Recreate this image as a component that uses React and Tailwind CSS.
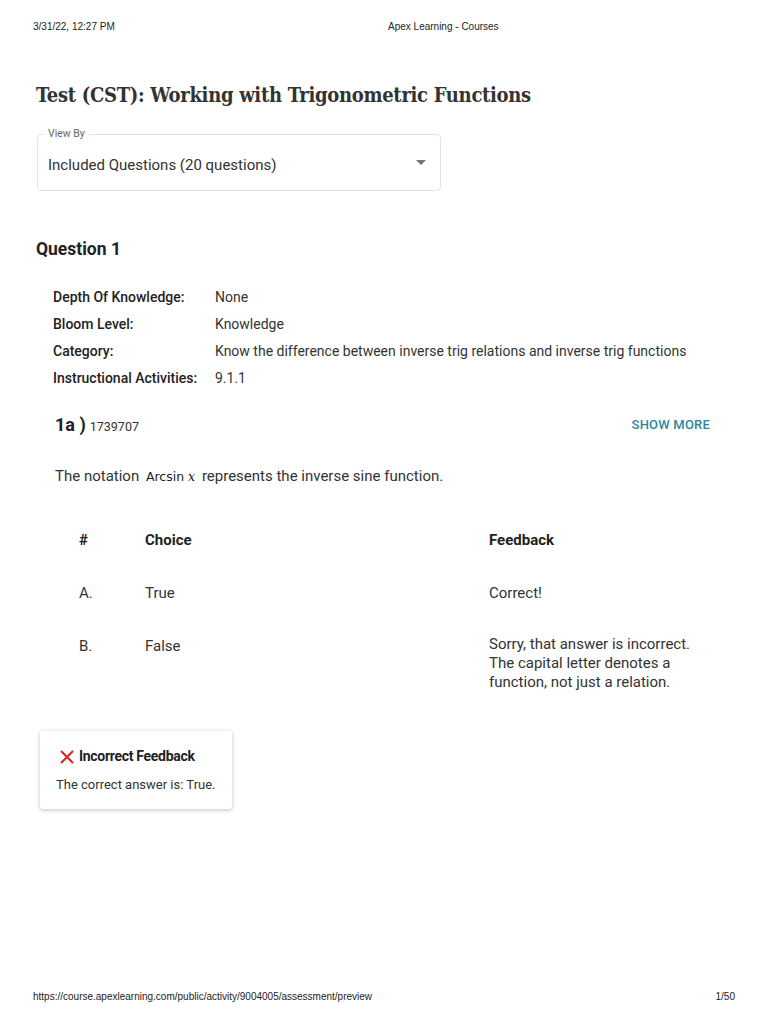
import React from "react";

const roboto = { fontFamily: "Roboto, 'Liberation Sans', sans-serif" };

function Meta({ label, value }) {
  return (
    <div className="flex h-[27px] items-center">
      <div className="w-[162px] shrink-0 text-[14px] font-medium text-[#222]">{label}</div>
      <div className="text-[14px] text-[#333]">{value}</div>
    </div>
  );
}

export default function App() {
  return (
    <div className="relative h-[1024px] w-[768px] bg-white text-[#333]" style={roboto}>
      {/* print header */}
      <div className="flex h-[50px] items-start pt-[19px] pl-[33px] text-[10px] text-[#222] font-['Liberation_Sans',sans-serif]">
        <div className="w-[355px]">3/31/22, 12:27 PM</div>
        <div>Apex Learning - Courses</div>
      </div>

      <div className="pl-[36px] pr-[58px]">
        {/* title */}
        <h1 className="mt-[30px] text-[20px] font-bold leading-[30px] text-[#333] tracking-[-0.3px] font-['DejaVu_Serif_Condensed','DejaVu_Serif',serif]">
          Test (CST): Working with Trigonometric Functions
        </h1>

        {/* select */}
        <div className="relative mt-[24px] ml-[1px] h-[57px] w-[404px] rounded-[4px] border border-[#e3e3e3]">
          <div className="absolute left-[6px] top-[-8px] bg-white px-[4px] text-[10.5px] leading-[14px] text-[#666]">View By</div>
          <div className="flex h-full items-center justify-between pl-[10px] pr-[14px] pt-[6px]">
            <span className="text-[15px] text-[#333]">Included Questions (20 questions)</span>
            <svg width="10" height="5" viewBox="0 0 10 5" className="mb-[6px]">
              <path d="M0 0 L10 0 L5 5 Z" fill="#777" />
            </svg>
          </div>
        </div>

        {/* question */}
        <h2 className="mt-[46px] text-[17.5px] font-bold leading-[24px] text-[#222]">Question 1</h2>

        <div className="mt-[23px] pl-[17px]">
          <Meta label="Depth Of Knowledge:" value="None" />
          <Meta label="Bloom Level:" value="Knowledge" />
          <Meta label="Category:" value="Know the difference between inverse trig relations and inverse trig functions" />
          <Meta label="Instructional Activities:" value="9.1.1" />
        </div>

        <div className="mt-[19px] flex items-center justify-between pl-[19px] pr-[0px]">
          <div className="flex items-baseline gap-[4px]">
            <span className="text-[18px] font-bold text-[#222]">1a )</span>
            <span className="text-[12.5px] text-[#333]">1739707</span>
          </div>
          <span className="text-[13px] font-medium tracking-[0.2px] text-[#2a8a9c]">SHOW MORE</span>
        </div>

        <p className="mt-[27px] pl-[19px] text-[15px] text-[#333]">
          The notation{" "}
          <span className="mx-[3px] text-[12.5px] text-[#222] font-['DejaVu_Sans',sans-serif]">
            Arcsin <i className="font-['DejaVu_Serif',serif]">x</i>
          </span>{" "}
          represents the inverse sine function.
        </p>

        {/* table */}
        <div className="mt-[38px] pl-[43px] text-[15px]">
          <div className="flex h-[30px] items-center font-bold text-[#222]">
            <div className="w-[66px]">#</div>
            <div className="w-[344px]">Choice</div>
            <div>Feedback</div>
          </div>
          <div className="mt-[26px] flex text-[#333]">
            <div className="w-[66px]">A.</div>
            <div className="w-[344px]">True</div>
            <div>Correct!</div>
          </div>
          <div className="mt-[31px] flex text-[#333]">
            <div className="w-[66px]">B.</div>
            <div className="w-[344px]">False</div>
            <div className="w-[215px] leading-[19px]">
              Sorry, that answer is incorrect. The capital letter denotes a function, not just a relation.
            </div>
          </div>
        </div>

        {/* feedback card */}
        <div className="mt-[39px] ml-[4px] w-[192px] rounded-[3px] bg-white px-[16px] pt-[15px] pb-[14px] shadow-[0_1px_4px_rgba(0,0,0,0.25)]">
          <div className="flex items-center gap-[4px]">
            <svg width="16" height="16" viewBox="0 0 16 16" className="ml-[3px]">
              <path d="M2 2 L14 14 M14 2 L2 14" stroke="#e02020" strokeWidth="2" />
            </svg>
            <span className="text-[14px] font-bold tracking-[-0.3px] text-[#222]">Incorrect Feedback</span>
          </div>
          <div className="mt-[8px] text-[13px] text-[#333]">The correct answer is: True.</div>
        </div>
      </div>

      {/* print footer */}
      <div className="absolute bottom-[20px] left-[33px] right-[33px] flex justify-between text-[10px] text-[#222] font-['Liberation_Sans',sans-serif]">
        <span>https://course.apexlearning.com/public/activity/9004005/assessment/preview</span>
        <span>1/50</span>
      </div>
    </div>
  );
}
